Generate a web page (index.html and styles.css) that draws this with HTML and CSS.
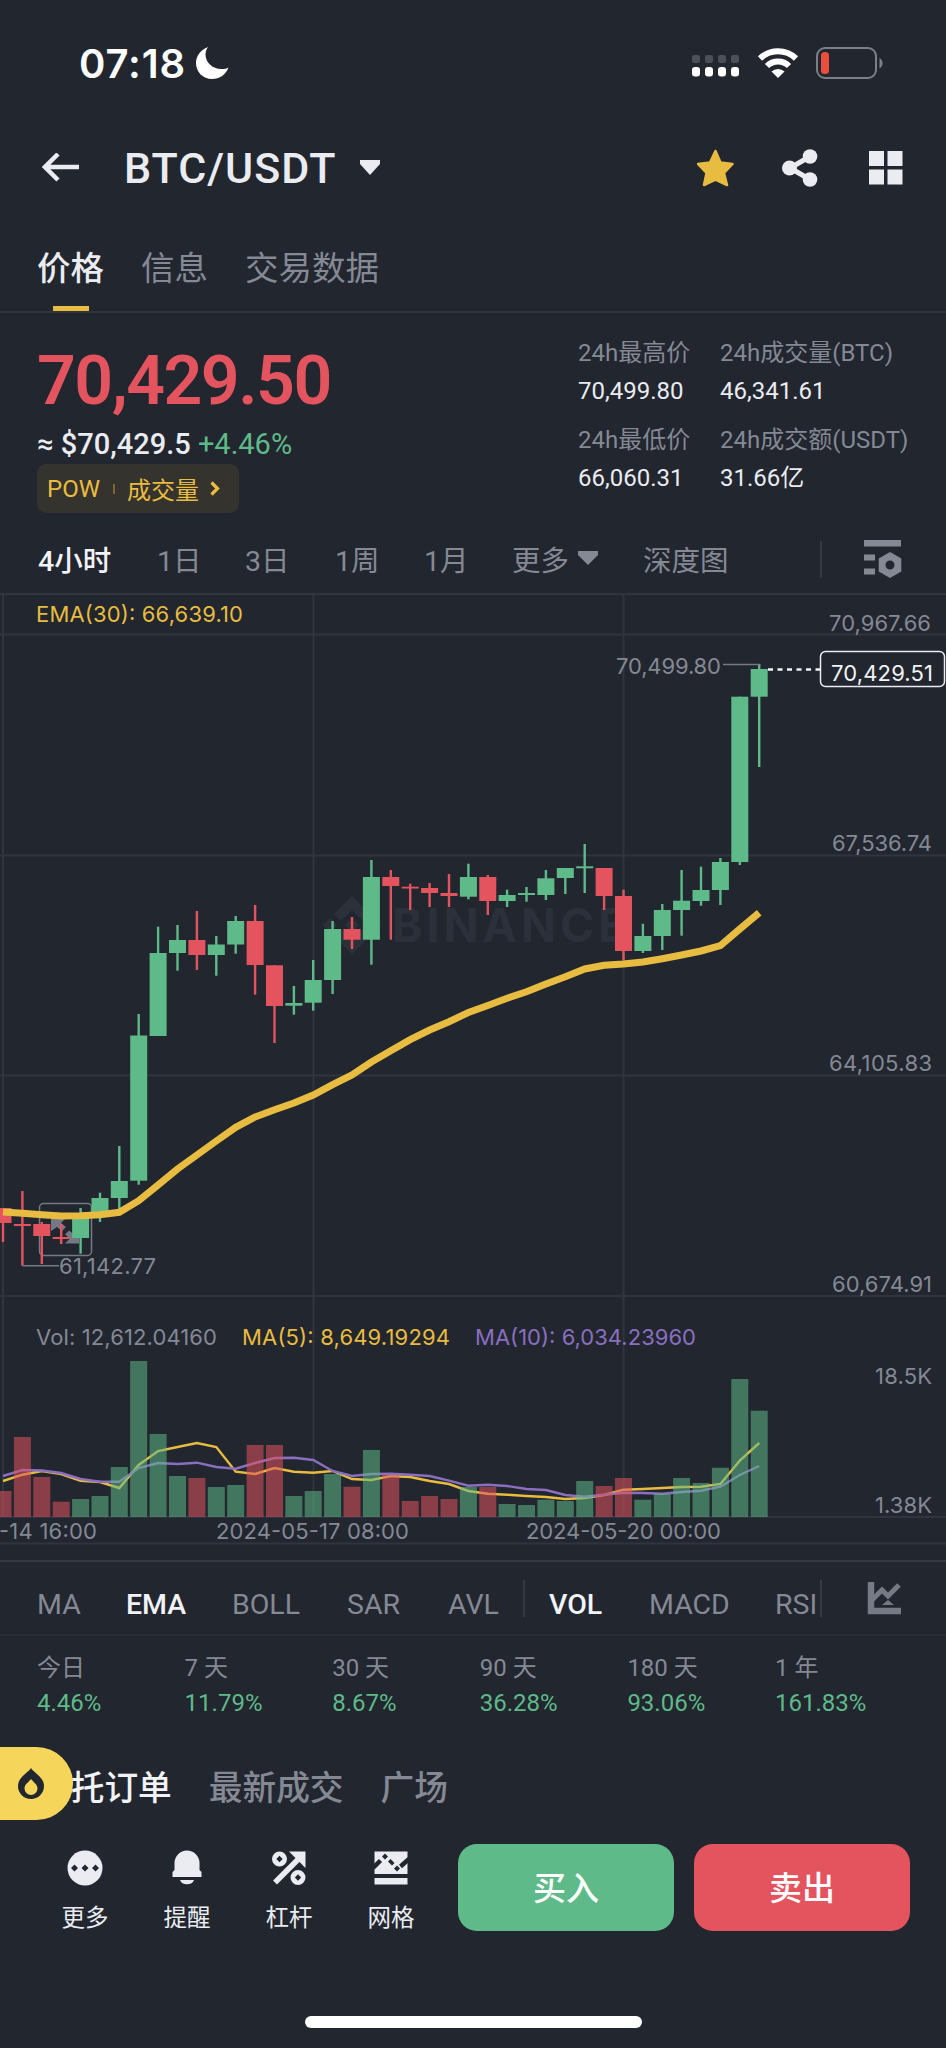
FILE: index.html
```html
<!DOCTYPE html>
<html lang="zh-CN">
<head>
    <meta charset="UTF-8">
    <meta name="viewport" content="width=device-width, initial-scale=1.0">
    <title>BTC/USDT</title>
    <link rel="stylesheet" href="styles.css">
</head>
<body>
    <div class="status-bar">
        <span class="time">07:18</span>
        <svg class="moon" width="33" height="32" viewBox="0 0 33 32"><path d="M12 0C4.500 3 0 9 0 16c0 9 7 16 16 16 7.500 0 14-4.500 16.500-11.500C31 21.500 28 22 25.500 22 16 22 9.500 15 9.500 7.500 9.500 5 10.500 2 12 0z" fill="#fff"/></svg>
        <svg class="signal" width="48" height="24" viewBox="0 0 48 24">
            <g fill="#4b4f58"><rect x="0" y="1" width="8" height="8" rx="2"/><rect x="13" y="1" width="8" height="8" rx="2"/><rect x="26" y="1" width="8" height="8" rx="2"/><rect x="39" y="1" width="8" height="8" rx="2"/></g>
            <g fill="#fff"><rect x="0" y="13" width="8" height="9.500" rx="3"/><rect x="13" y="13" width="8" height="9.500" rx="3"/><rect x="26" y="13" width="8" height="9.500" rx="3"/><rect x="39" y="13" width="8" height="9.500" rx="3"/></g>
        </svg>
        <svg class="wifi" width="42" height="32" viewBox="0 0 42 32">
            <path d="M3 11.500a26 26 0 0 1 36 0" fill="none" stroke="#fff" stroke-width="6"/>
            <path d="M10 19a15.500 15.500 0 0 1 22 0" fill="none" stroke="#fff" stroke-width="6"/>
            <path d="M14.500 24.500a9.500 9.500 0 0 1 13 0L21 31z" fill="#fff"/>
        </svg>
        <svg class="battery" width="68" height="34" viewBox="0 0 68 34">
            <rect x="1" y="2" width="59" height="30" rx="8" fill="none" stroke="#7b7f88" stroke-width="2"/>
            <rect x="5" y="6" width="8" height="22" rx="3.500" fill="#ea4e3d"/>
            <path d="M63.500 12c4 2.500 4 8 0 10.500z" fill="#7b7f88"/>
        </svg>
    </div>

    <div class="header">
        <svg class="back" width="38" height="30" viewBox="0 0 38 30"><path d="M37 14H4M16 1L3 14l13 13" fill="none" stroke="#eaecf1" stroke-width="4.500"/></svg>
        <h1>BTC/USDT</h1>
        <svg class="caret" width="20" height="15" viewBox="0 0 20 15"><path d="M0 0h20v4L10 15 0 4z" fill="#eaecf1"/></svg>
        <svg class="star" width="37" height="38" viewBox="0 0 37 38"><path d="M18.500 2l5 11.500 12 1.500-8.500 9 3 12-11.500-5.500L7 36l2.500-12-8.500-9 12-1.500z" fill="#e8bc40" stroke="#e8bc40" stroke-width="2.500" stroke-linejoin="round"/></svg>
        <svg class="share" width="36" height="38" viewBox="0 0 36 38">
            <path d="M28 7.500L8 19l20 11.500" fill="none" stroke="#eaecf1" stroke-width="5"/>
            <g fill="#eaecf1"><circle cx="7.500" cy="19" r="7.500"/><circle cx="28" cy="7.500" r="7.300"/><circle cx="28" cy="30.500" r="7.300"/></g>
        </svg>
        <svg class="apps" width="34" height="34" viewBox="0 0 34 34"><path d="M0 0h15v15H0zM18.500 0h15v15h-15zM0 18.500h15v15H0zM18.500 18.500h15v15h-15z" fill="#eaecf1"/></svg>
    </div>

    <div class="tabs">
        <span class="tab active">价格</span>
        <span class="tab">信息</span>
        <span class="tab">交易数据</span>
    </div>

    <div class="ticker">
        <div class="ticker-left">
            <div class="price">70,429.50</div>
            <div class="fiat">≈ $70,429.5 <span class="up">+4.46%</span></div>
            <div class="tags">
                <span>POW</span>
                <i class="tag-line"></i>
                <span>成交量</span>
                <svg width="10" height="15" viewBox="0 0 10 15"><path d="M1.500 1.500l6 6-6 6" fill="none" stroke="#e8bc40" stroke-width="3.200"/></svg>
            </div>
        </div>
        <div class="stats">
            <div class="stat"><label>24h最高价</label><b>70,499.80</b></div>
            <div class="stat"><label>24h成交量(BTC)</label><b>46,341.61</b></div>
            <div class="stat"><label>24h最低价</label><b>66,060.31</b></div>
            <div class="stat"><label>24h成交额(USDT)</label><b>31.66亿</b></div>
        </div>
    </div>

    <div class="intervals">
        <span class="active">4小时</span>
        <span>1日</span>
        <span>3日</span>
        <span>1周</span>
        <span>1月</span>
        <span class="more">更多 <svg width="20" height="14" viewBox="0 0 20 14"><path d="M0 0h20v4L10 14 0 4z" fill="#848994"/></svg></span>
        <span>深度图</span>
        <i class="divider"></i>
        <svg width="38" height="40" viewBox="0 0 38 40">
            <path d="M0 1h37v6.500H0zM0 15.500h11v6H0zM0 29.500h11v6H0z" fill="#848994"/>
            <path d="M26 13l11.300 6.500v13L26 39l-11.300-6.500v-13zM26 21.500a4.500 4.500 0 1 0 0 9 4.500 4.500 0 1 0 0-9z" fill="#848994" fill-rule="evenodd"/>
        </svg>
    </div>

    <!-- viewBox y runs from 595 so the series below are plain page coordinates -->
    <svg class="chart" id="chart" viewBox="0 595 946 965" width="946" height="965">
        <g class="grid">
            <path d="M0 634.500h946M0 855.500h946M0 1075.500h946M0 1296h946M0 1517h946M0 1543.500h946"/>
            <path d="M3 595v922M313.500 595v922M623.500 595v922"/>
        </g>
        <g class="watermark">
            <path d="M352 896l18 18-7 7-11-11-11 11-7-7zM352 954l-18-18 7-7 11 11 11-11 7 7zM352 918l7 7-7 7-7-7zM323 925l7-7 7 7-7 7zM367 925l7-7 7 7-7 7z"/>
            <text x="392" y="942" textLength="234">BINANCE</text>
        </g>
        <g class="expand">
            <rect x="39.500" y="1203.500" width="52" height="52" rx="4"/>
            <path d="M51 1219h14l-4 4 5 4-4 4-5-4-6 4zM79 1243.500H65l5-5-5-4 4-4 5 4 5-4z"/>
        </g>
        <g id="volume"></g>
        <g id="candles"></g>
        <path class="callout" d="M22.500 1265.700H59M723 664.500h36.500"/>
        <path class="last-line" d="M768 669.500h52"/>
        <rect class="last-box" x="820.500" y="651.500" width="124" height="35" rx="5"/>
        <g class="labels">
            <text class="yellow" x="36" y="621.500" textLength="207">EMA(30): 66,639.10</text>
            <text x="59" y="1274" textLength="97">61,142.77</text>
            <text x="616" y="673.500" textLength="105">70,499.80</text>
            <text x="829" y="630.500" textLength="102">70,967.66</text>
            <text class="white" x="831" y="680.500" textLength="102">70,429.51</text>
            <text x="832" y="850.500" textLength="100">67,536.74</text>
            <text x="829" y="1071" textLength="103">64,105.83</text>
            <text x="832" y="1291.500" textLength="100">60,674.91</text>
            <text x="36" y="1344.500" textLength="181">Vol: 12,612.04160</text>
            <text class="yellow" x="242" y="1344.500" textLength="208">MA(5): 8,649.19294</text>
            <text class="purple" x="475" y="1344.500" textLength="221">MA(10): 6,034.23960</text>
            <text x="875" y="1383.500" textLength="57">18.5K</text>
            <text x="875" y="1512.500" textLength="57">1.38K</text>
            <text x="-1" y="1538.500" textLength="98">-14 16:00</text>
            <text x="216" y="1538.500" textLength="193">2024-05-17 08:00</text>
            <text x="526" y="1538.500" textLength="195">2024-05-20 00:00</text>
        </g>
    </svg>

    <div class="indicators">
        <span>MA</span>
        <span class="active">EMA</span>
        <span>BOLL</span>
        <span>SAR</span>
        <span>AVL</span>
        <i class="divider"></i>
        <span class="active">VOL</span>
        <span>MACD</span>
        <span>RSI</span>
        <i class="divider"></i>
        <svg width="36" height="34" viewBox="0 0 36 34">
            <path d="M4 1v29H34" fill="none" stroke="#757a85" stroke-width="6.500"/>
            <path d="M5 19L15 9l6 6L32 4" fill="none" stroke="#757a85" stroke-width="5"/>
            <path d="M15 24l6-5 6 5z" fill="#757a85"/>
        </svg>
    </div>

    <div class="performance">
        <div><label>今日</label><b>4.46%</b></div>
        <div><label>7 天</label><b>11.79%</b></div>
        <div><label>30 天</label><b>8.67%</b></div>
        <div><label>90 天</label><b>36.28%</b></div>
        <div><label>180 天</label><b>93.06%</b></div>
        <div><label>1 年</label><b>161.83%</b></div>
    </div>

    <div class="order-tabs">
        <span class="active">委托订单</span>
        <span>最新成交</span>
        <span>广场</span>
        <div class="hot">
            <svg width="26" height="31" viewBox="0 0 26 31"><path d="M13 0c3 5 13 9 13 18a13 13 0 0 1-26 0C0 9 10 5 13 0zM13 11c-2 3-6.500 5-6.500 9.500a6.500 6.500 0 0 0 13 0C19.500 16 15 14 13 11z" fill="#22262f" fill-rule="evenodd"/></svg>
        </div>
    </div>

    <div class="bottom-bar">
        <div class="action">
            <svg width="36" height="36" viewBox="0 0 36 36"><circle cx="18" cy="18" r="17.500" fill="#eaecf1"/><path d="M7.500 14.500L11 18l-3.500 3.500L4 18zM18 14.500l3.500 3.500-3.500 3.500-3.500-3.500zM28.500 14.500L32 18l-3.500 3.500L25 18z" fill="#22262f"/></svg>
            <span>更多</span>
        </div>
        <div class="action">
            <svg width="36" height="36" viewBox="0 0 36 36"><path d="M5.500 20V13a12.500 12.500 0 0 1 25 0v7l2 2v5h-29v-5zM11 30h14a7.300 6 0 0 1-14 0z" fill="#eaecf1"/></svg>
            <span>提醒</span>
        </div>
        <div class="action">
            <svg width="36" height="36" viewBox="0 0 36 36">
                <path d="M4 32.500L27 9.500" stroke="#eaecf1" stroke-width="5.500" fill="none"/>
                <path d="M18 1.500h16.500V18z" fill="#eaecf1"/>
                <path d="M8.500 1.500a7.500 7.500 0 1 0 0 15 7.500 7.500 0 1 0 0-15zM8.500 5.800L11.700 9l-3.200 3.200L5.300 9zM27 20a7.500 7.500 0 1 0 0 15 7.500 7.500 0 1 0 0-15zM27 24.300l3.200 3.200-3.200 3.200-3.200-3.200z" fill="#eaecf1" fill-rule="evenodd"/>
            </svg>
            <span>杠杆</span>
        </div>
        <div class="action">
            <svg width="36" height="36" viewBox="0 0 36 36">
                <path d="M1.500 1.500h33V24h-33zM1.500 28h33v6.500h-33z" fill="#eaecf1"/>
                <path d="M0 18l7.500-7.500M36 9l-8.500 7.500" stroke="#22262f" stroke-width="4.500" fill="none"/>
                <path d="M12 3.500L15 6.500l-3 3-3-3zM17.500 9l4 4-2.500 2.500-4-4zM24 15.500l3 3-3 3-3-3z" fill="#22262f"/>
            </svg>
            <span>网格</span>
        </div>
        <button class="buy">买入</button>
        <button class="sell">卖出</button>
    </div>
    <div class="home-indicator"></div>

    <script src="chart.js"></script>
</body>
</html>
```
FILE: styles.css
```css
* {
    box-sizing: border-box;
}
body {
    margin: 0;
    width: 946px;
    height: 2048px;
    overflow: hidden;
    background: #22262f;
    color: #eaecf1;
    font-family: Roboto, "Noto Sans CJK SC", sans-serif;
}
svg {
    display: block;
    flex: none;
}
span, label, b, h1 {
    white-space: nowrap;
    font-weight: 400;
}
i.divider {
    width: 2px;
    height: 37px;
    background: #343943;
}

/* status bar */
.status-bar {
    display: flex;
    align-items: center;
    height: 126px;
    padding-left: 79px;
}
.time {
    width: 117px;
    font: 600 40px Inter, sans-serif;
    letter-spacing: 0.9px;
    color: #fff;
}
.signal {
    margin: 6px 17px 0 463px;
}
.wifi {
    margin-right: 17px;
}

/* header */
.header {
    display: flex;
    align-items: center;
    height: 84px;
    padding-left: 42px;
}
.header h1 {
    width: 235px;
    margin: 0 0 0 43px;
    padding-left: 1px;
    font-size: 43px;
    line-height: 60px;
    font-weight: 500;
    letter-spacing: 1px;
}
.caret {
    margin: 0 1px 2px 2px;
}
.star {
    margin-left: 316px;
}
.share {
    margin-left: 48px;
}
.apps {
    margin-left: 51px;
}

/* tabs */
.tabs {
    display: flex;
    gap: 37px;
    height: 103px;
    padding-left: 37px;
    border-bottom: 2px solid #2f343e;
}
.tab {
    display: flex;
    flex-direction: column;
    align-items: center;
    padding-top: 34px;
    font-size: 33.5px;
    line-height: 50px;
    color: #848994;
}
.tab.active {
    color: #eaecf1;
    font-weight: 500;
}
.tab.active::after {
    content: "";
    width: 36px;
    height: 6px;
    margin-top: 12px;
    background: #e8bc40;
}

/* ticker */
.ticker {
    display: flex;
    height: 212px;
    padding-left: 37px;
}
.ticker-left {
    width: 541px;
}
.price {
    margin-top: 28px;
    font-size: 68px;
    line-height: 80px;
    font-weight: 600;
    letter-spacing: -1.5px;
    color: #e4545f;
}
.fiat {
    margin: 6px 0 3px;
    font-size: 29px;
    line-height: 34px;
    font-weight: 500;
    letter-spacing: 0;
    white-space: nowrap;
}
.up {
    color: #5fba89;
}
.tags {
    display: flex;
    align-items: center;
    width: 202px;
    height: 49px;
    padding-left: 10px;
    border-radius: 9px;
    background: #35332e;
    color: #e8bc40;
    font-size: 24px;
}
.tag-line {
    width: 2px;
    height: 10px;
    margin: 0 12px 0 13px;
    background: #7c672f;
}
.tags svg {
    margin-left: 11px;
}
.stats {
    display: grid;
    grid-template-columns: 142px auto;
    grid-auto-rows: 87px;
    align-content: start;
    padding-top: 21px;
}
.stat {
    display: flex;
    flex-direction: column;
}
.stat label {
    font-size: 24px;
    line-height: 38px;
    color: #848994;
}
.stat b {
    font-size: 24px;
    line-height: 38px;
}

/* intervals */
.intervals {
    display: grid;
    grid-template-columns: 119px 88px 90px 89px 88px 131px 177px 44px auto;
    align-items: center;
    height: 70px;
    padding-left: 38px;
    border-bottom: 2px solid #2f343e;
    font-size: 28.5px;
    color: #848994;
}
.intervals span {
    padding-bottom: 2px;
}
.active {
    color: #f2f3f7;
    font-weight: 500;
}
.more {
    display: flex;
    align-items: center;
    gap: 9px;
}

/* chart */
.grid path {
    fill: none;
    stroke: #2f343e;
    stroke-width: 2;
}
.watermark {
    fill: #2b303a;
    font: 700 46px Inter, sans-serif;
}
.expand rect {
    fill: none;
    stroke: #747985;
    stroke-width: 1.5;
}
.expand path {
    fill: #747985;
}
.labels {
    font: 400 22px Inter, sans-serif;
    fill: #848994;
}
.labels .yellow {
    fill: #e8bc40;
}
.labels .purple {
    fill: #8a6fc0;
}
.labels .white {
    fill: #f2f3f7;
}
.callout {
    fill: none;
    stroke: #747985;
    stroke-width: 1.5;
}
.last-line {
    stroke: #f2f3f7;
    stroke-width: 2.5;
    stroke-dasharray: 5 4.5;
}
.last-box {
    fill: #22262f;
    stroke: #eaecf1;
    stroke-width: 1.5;
}
.green {
    fill: #5fba89;
}
.red {
    fill: #e4545f;
}
.bar {
    opacity: 0.54;
}
.ema, .ma5, .ma10 {
    fill: none;
    stroke: #e8bc40;
    stroke-width: 2.4;
}
.ema {
    stroke-width: 7;
}
.ma10 {
    stroke: #8a6fc0;
}

/* indicators */
.indicators {
    display: grid;
    grid-template-columns: 89px 106px 115px 101px 75px 26px 100px 126px 45px 47px auto;
    align-items: center;
    height: 76px;
    padding-left: 37px;
    border-top: 2px solid #343943;
    border-bottom: 2px solid #292e37;
    font-size: 28.5px;
    color: #848994;
}
.indicators span {
    padding-top: 12px;
}

/* performance */
.performance {
    display: grid;
    grid-template-columns: repeat(6, 147.6px);
    height: 109px;
    padding: 15px 0 0 37px;
}
.performance div {
    display: flex;
    flex-direction: column;
}
.performance label, .performance b {
    font-size: 24px;
    line-height: 35px;
    color: #848994;
}
.performance b {
    color: #5fba89;
}

/* order tabs */
.order-tabs {
    position: relative;
    display: flex;
    align-items: center;
    gap: 37px;
    height: 86px;
    padding: 0 0 5px 37px;
    font-size: 33.7px;
    color: #848994;
}
.order-tabs span {
    font-weight: 500;
}
/* floating pill over the first tab */
.hot {
    position: absolute;
    left: 0;
    top: 2px;
    display: flex;
    align-items: center;
    width: 73px;
    height: 73px;
    padding-left: 18px;
    border-radius: 0 37px 37px 0;
    background: #f5d65a;
}

/* bottom bar */
.bottom-bar {
    display: flex;
    height: 185px;
    padding: 13px 0 0 34px;
}
.action {
    display: flex;
    flex-direction: column;
    align-items: center;
    width: 102px;
    padding-top: 6px;
    font-size: 23.5px;
    line-height: 36px;
}
.action span {
    margin-top: 14px;
}
.buy, .sell {
    width: 216px;
    height: 87px;
    margin-left: 16px;
    padding: 0 0 3px;
    border: none;
    border-radius: 19px;
    background: #5fba89;
    color: #fff;
    font-family: inherit;
    font-size: 33px;
    font-weight: 500;
}
.sell {
    margin-left: 20px;
    background: #e4545f;
}
.home-indicator {
    width: 337px;
    height: 12px;
    margin: 0 auto;
    border-radius: 6px;
    background: #fff;
}
```
FILE: chart.js
```js
// [up, body top, body bottom, high, low, volume top]
const rows = [
    [0, 1208, 1223, 1208, 1242, 1491], [0, 1224, 1226, 1191, 1265.7, 1437],
    [0, 1224, 1236, 1222, 1264, 1477], [0, 1237, 1239, 1224, 1244, 1501.7],
    [1, 1216, 1238, 1208, 1253.7, 1499], [1, 1198, 1214, 1192.7, 1222, 1496],
    [1, 1181, 1198, 1146, 1213, 1467], [1, 1035.5, 1180.7, 1014, 1184.7, 1361],
    [1, 953, 1036, 926.7, 1036, 1434], [1, 940, 953, 925, 970.7, 1476],
    [0, 940, 955, 911, 970, 1478], [1, 944.5, 955, 936, 975.7, 1487],
    [1, 921, 944.5, 916, 953.7, 1485], [0, 921, 965, 905, 994.7, 1445],
    [0, 965.3, 1006, 965.3, 1043, 1445], [1, 1003, 1005.7, 986, 1014.7, 1496],
    [1, 980, 1002.7, 960, 1010.7, 1491], [1, 929, 980, 921, 994, 1474],
    [0, 929, 939.7, 917, 949, 1486.7], [1, 877, 939.7, 860, 964.7, 1450],
    [0, 877, 886, 870, 939.7, 1475], [0, 886.7, 888.5, 883.7, 910, 1501],
    [0, 888, 893, 883, 907, 1496], [0, 893, 896, 874, 907, 1499],
    [1, 877, 896.7, 863.7, 899.3, 1487], [0, 877, 901, 875, 915, 1487],
    [1, 895, 901, 889.7, 907, 1504], [1, 893, 895, 887, 901.7, 1505],
    [1, 878.3, 895, 870, 900, 1499.7], [1, 868, 878, 868, 894, 1501],
    [1, 866.3, 868.3, 844, 893, 1481], [0, 868, 896, 868, 910, 1486],
    [0, 896, 951, 889.7, 960.7, 1478], [1, 936, 951, 923.7, 953, 1499.7],
    [1, 910, 936, 904, 950, 1493.7], [1, 900.7, 910, 870, 935.7, 1478],
    [1, 890, 901, 866.7, 905.7, 1483], [1, 862, 890, 858, 905, 1467.7],
    [1, 696.7, 862, 696.7, 865, 1379], [1, 669, 696.7, 664, 767, 1410.7]
];
const ema = [1212, 1213.3, 1214.7, 1216, 1215.7, 1214.7, 1212.3, 1200.7, 1185, 1169, 1155, 1141, 1127.3, 1117, 1109.7, 1103, 1095, 1084.7, 1075, 1062, 1050.7, 1039.7, 1030, 1021.7, 1012.5, 1005.5, 998.3, 991.7, 984, 976.7, 969, 965.3, 964, 962, 958.7, 955, 951, 945.7, 929, 912.7];
const ma5 = [1481, 1474.7, 1471, 1474, 1480.7, 1482, 1488, 1465, 1451, 1447, 1443, 1447, 1471.7, 1474, 1468, 1471.7, 1472.7, 1471, 1479, 1480, 1476, 1477, 1481, 1484, 1491, 1493.7, 1494.7, 1496, 1497, 1499, 1498, 1495, 1489.7, 1489, 1488, 1487, 1486.7, 1484, 1460.7, 1443];
const ma10 = [1476, 1470, 1470.5, 1473, 1479, 1481.7, 1481.7, 1468, 1463, 1464, 1462.7, 1467, 1468.7, 1463, 1458, 1457.7, 1460, 1471, 1476, 1474, 1473.7, 1474.7, 1476, 1480.7, 1485.7, 1484.7, 1486, 1489, 1490, 1495, 1496.7, 1494.7, 1492.7, 1493, 1493.7, 1492, 1490.7, 1486.7, 1475, 1466];

const STEP = 19.39;
const BASE = 1517;
const x = i => 3 + i * STEP;

function rect(cls, left, top, w, h) {
    return `<rect class="${cls}" x="${left.toFixed(1)}" y="${top}" width="${w}" height="${h.toFixed(1)}"/>`;
}
function line(cls, ys) {
    return `<polyline class="${cls}" points="${ys.map((y, i) => x(i).toFixed(1) + "," + y).join(" ")}"/>`;
}

let candles = "";
let bars = "";
rows.forEach(([up, top, bottom, high, low, vol], i) => {
    const color = up ? "green" : "red";
    candles += rect(color, x(i) - 1.2, high, 2.4, low - high);
    candles += rect(color, x(i) - 8.5, top, 17, bottom - top);
    bars += rect("bar " + color, x(i) - 8.5, vol, 17, BASE - vol);
});

document.getElementById("volume").innerHTML = line("ma5", ma5) + line("ma10", ma10) + bars;
document.getElementById("candles").innerHTML = candles + line("ema", ema);
```
